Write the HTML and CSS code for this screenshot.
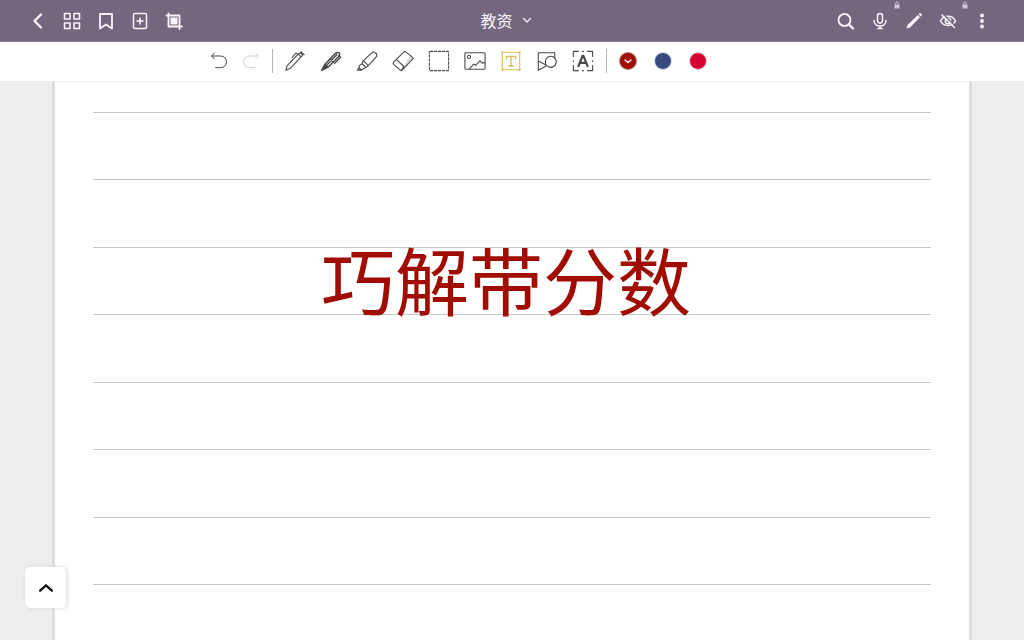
FILE: index.html
```html
<!DOCTYPE html>
<html lang="zh-CN">
  <head>
    <meta charset="UTF-8" />
    <meta name="viewport" content="width=device-width, initial-scale=1.0" />
    <title>教资</title>
    <link rel="stylesheet" href="styles.css">
  </head>
  <body>
    <header class="topbar">
      <nav class="group">
        <button aria-label="Back"><svg viewBox="0 0 20 20"><path d="M13 3.500 6.500 10l6.500 6.500" stroke-width="2.400" /></svg></button>
        <button aria-label="Pages"><svg viewBox="0 0 20 20"><path d="M2.500 2.500h5.500v5.500H2.500zM12 2.500h5.500v5.500H12zM2.500 12h5.500v5.500H2.500zM12 12h5.500v5.500H12z" /></svg></button>
        <button aria-label="Bookmark"><svg viewBox="0 0 20 20"><path d="M4 3h12v14.500l-6-4-6 4z" stroke-width="1.800" /></svg></button>
        <button aria-label="Add page"><svg viewBox="0 0 20 20"><rect x="3.500" y="2.500" width="13" height="15" rx="1.500" /><path d="M10 7v6M7 10h6" /></svg></button>
        <button aria-label="Crop"><svg viewBox="0 0 20 20"><path d="M2.500 4.500h13V18M4.500 2.500v13H18" stroke-width="1.800" /><path class="solid" d="M6.500 6.500h7v7h-7z" /></svg></button>
      </nav>
      <button class="title">教资<svg viewBox="0 0 10 10"><path d="M1.500 3.500 5 7l3.500-3.500" stroke-width="1.200" /></svg></button>
      <nav class="group right">
        <button aria-label="Search"><svg viewBox="0 0 20 20"><circle cx="8.500" cy="9" r="6" stroke-width="1.800" /><path d="m13 13.500 4 4" stroke-width="2.200" /></svg></button>
        <button aria-label="Record">
          <svg viewBox="0 0 20 20"><rect x="7.500" y="2.500" width="5" height="9.500" rx="2.500" /><path d="M4 9.500c0 7.300 12 7.300 12 0M10 15v2.500M8 17.500h4" /></svg>
          <svg class="lock" viewBox="0 0 6 8"><path d="M1.700 4V2.300a1.300 1.300 0 0 1 2.600 0V4" stroke-width="1" /><rect class="solid" x=".5" y="3.500" width="5" height="4" /></svg>
        </button>
        <button aria-label="Edit"><svg viewBox="0 0 20 20"><path class="solid" d="m2.500 17.500 1-3.500L13.700 4l2.300 2.300L6 16.500zM14.500 3.200l1-1c1-.7 3 1.300 2.300 2.300l-1 1z" /></svg></button>
        <button aria-label="Hide">
          <svg viewBox="0 0 20 20"><path d="M2.500 10c3-6.500 12-6.500 15 0-3 6-12 6-15 0z" /><circle cx="10" cy="10" r="2.700" /><path class="gap" d="m5.500 3.500 12 12" /><path d="m4 4 12.500 12.500" /></svg>
          <svg class="lock" viewBox="0 0 6 8"><path d="M1.700 4V2.300a1.300 1.300 0 0 1 2.600 0V4" stroke-width="1" /><rect class="solid" x=".5" y="3.500" width="5" height="4" /></svg>
        </button>
        <button aria-label="More"><svg viewBox="0 0 20 20"><g class="solid"><circle cx="10" cy="4.500" r="1.900" /><circle cx="10" cy="10" r="1.900" /><circle cx="10" cy="15.500" r="1.900" /></g></svg></button>
      </nav>
    </header>

    <div class="toolbar" role="toolbar">
      <button class="step" aria-label="Undo"><svg viewBox="0 0 24 24"><path d="M6.500 2.500 3 6l3.500 3.500M3 6h11a7 7 0 0 1 0 14H8" /></svg></button>
      <button class="step" aria-label="Redo" disabled><svg viewBox="0 0 24 24"><path d="M17.500 2.500 21 6l-3.500 3.500M21 6H10a7 7 0 0 0 0 14h6" /></svg></button>
      <span class="divider"></span>
      <button aria-label="Pencil"><svg viewBox="0 0 24 24"><path d="M2 22 3.500 17 15.500 4.500 18.500 7.500 7 20zM15.500 4.500l2.500-1.500 2.500 2.500-2 2M18.500 2 22 5M9 8l4-4.500 2 1" /></svg></button>
      <button aria-label="Pen"><svg viewBox="0 0 24 24"><path d="M2 22 5.500 15.500 16 4.500c1.500-2 5-2.500 5.500-.5s-1 3-2 4L9 18.500z" stroke-width="1.600" /><path class="ink" d="m2 22 3.500-6.500L9 18.500z" /><path d="M11 9.500l3.500 3.500M7.500 16.500 18.500 5M20.500 6l2 2-6.500 6.500" stroke-width="1.500" /></svg></button>
      <button aria-label="Highlighter"><svg viewBox="0 0 24 24"><path d="m8 11.500 10.500-9.500 4 2v3L13.500 17zM8 11.500 6.500 15l4.500 4 2.500-2zM6.500 15 3.500 17v3l2.500 1.500 5-2.500M3 19.500 1.500 22H6" /></svg></button>
      <button aria-label="Eraser"><svg viewBox="0 0 24 24"><path class="shade" d="M11 21 20.500 5l2.500 3.500z" /><path d="M1.500 13.500 13 2q1-1 2 0l7.500 6q1 1 0 2L11 22q-1 1-2 0l-7-6q-1-1-.5-2.500zM5 10.500l8 7.500-2.500 3.500" /></svg></button>
      <button aria-label="Select"><svg viewBox="0 0 24 24"><rect x="1.500" y="1.500" width="21" height="21" rx="1" stroke-dasharray="2.600 1.800" /></svg></button>
      <button aria-label="Image"><svg viewBox="0 0 24 24"><rect x="1" y="3" width="22" height="18" rx="1" /><circle cx="5.500" cy="7.500" r="1.700" /><path d="m6 20.500 4.500-5 2.500 1 4.500-5 1.500 2.500h4" /></svg></button>
      <button class="active" aria-label="Text"><svg viewBox="0 0 24 24"><rect x="2.500" y="2.500" width="19" height="19" /><path d="M7 9.500V7h10v2.500M12 7v10.500M9.500 17.500h5" stroke-width="1.500" /><path class="ink" d="M1.500 1.500h2v2h-2zM20.500 1.500h2v2h-2zM1.500 20.500h2v2h-2zM20.500 20.500h2v2h-2z" stroke="none" /></svg></button>
      <button aria-label="Shapes"><svg viewBox="0 0 24 24"><path d="M2.500 11V3h18v5.500M2.500 12l9.500 5-9.500 5zM10.500 15a6 6 0 1 1 2.500 3" /></svg></button>
      <button aria-label="Recognize"><svg viewBox="0 0 24 24"><path d="M1.500 7V1.500H7M17 1.500h5.500V7M22.500 17v5.500H17M7 22.500H1.500V17M11.500 1.500h1M11.500 22.500h1M1.500 11.500v1M22.500 11.500v1" /><path d="m7 17.500 4.500-11h1l4.500 11M9 14h6" stroke-width="2.400" /></svg></button>
      <span class="divider"></span>
      <button class="swatch" aria-label="Dark red"><span class="dot dark-red"><svg viewBox="0 0 10 10"><path d="M2 4 5 6.500 8 4" stroke-width="1.300" /></svg></span></button>
      <button class="swatch" aria-label="Blue"><span class="dot blue"></span></button>
      <button class="swatch" aria-label="Red"><span class="dot red"></span></button>
    </div>

    <main class="desk">
      <article class="paper">
        <div class="rules">
          <span></span><span></span><span></span><span></span><span></span><span></span><span></span>
        </div>
        <h1 class="note">巧解带分数</h1>
      </article>
      <button class="expand" aria-label="Expand"><svg viewBox="0 0 20 20"><path d="m3.500 13 6.500-6 6.500 6" /></svg></button>
    </main>
  </body>
</html>
```

FILE: styles.css
```css
* {
  box-sizing: border-box;
  margin: 0;
  padding: 0;
}
body {
  display: flex;
  flex-direction: column;
  min-height: 100vh;
  background: #eee;
  font-family: "Noto Sans CJK SC", sans-serif;
}
button {
  display: flex;
  align-items: center;
  justify-content: center;
  border: 0;
  background: transparent;
  color: inherit;
  font: inherit;
  cursor: pointer;
}
svg {
  display: block;
  fill: none;
  stroke: currentColor;
  stroke-width: 1.5;
  stroke-linecap: round;
  stroke-linejoin: round;
}
.solid {
  fill: currentColor;
  stroke: none;
}

/* top bar */
.topbar {
  display: grid;
  grid-template-columns: 1fr auto 1fr;
  height: 42px;
  padding: 0 25px 0 21px;
  background: #74667e;
  border-bottom: 1px solid #8b7f94;
  color: #faf5fc;
}
.group {
  display: flex;

  & button {
    position: relative;
    width: 34px;
  }
  & svg {
    width: 20px;
    height: 20px;
  }
  & .lock {
    position: absolute;
    top: 1px;
    right: -3px;
    width: 6px;
    height: 8px;
    color: #cfc3d6;
  }
  & .gap {
    stroke: #74667e;
  }
}
.right {
  justify-content: flex-end;
}
.title {
  gap: 9px;
  padding: 0 8px 2px 0;
  font-size: 16px;

  & svg {
    width: 10px;
    height: 10px;
  }
}

/* drawing tools */
.toolbar {
  display: flex;
  align-items: center;
  justify-content: center;
  height: 40px;
  padding: 0 106px 2px 0;
  background: #fff;
  border-bottom: 1px solid #f0e9ee;
  color: #4a4a4a;

  & button {
    width: 36px;
    height: 36px;
  }
  & svg {
    width: 22px;
    height: 22px;
    stroke-width: 1.2;
  }
  & .step {
    width: 32px;
  }
  & .step svg {
    width: 20px;
    height: 20px;
  }
  & .step:disabled {
    color: #cfcfcf;
  }
  & .active {
    color: #d8bf55;
  }
  & .ink {
    fill: currentColor;
  }
  & .shade {
    fill: #d9d9e2;
    stroke: none;
  }
  & .swatch {
    width: 35px;
  }
}
.divider {
  width: 1px;
  height: 24px;
  margin: 0 4px 0 5px;
  background: #b5b5b5;
}
.dot {
  display: flex;
  align-items: center;
  justify-content: center;
  width: 18px;
  height: 18px;
  border: 1px solid #e3e3ec;
  border-radius: 50%;
  color: #fff;

  .toolbar & svg {
    width: 10px;
    height: 10px;
  }
}
.dark-red {
  border-color: #b08a88;
  background-color: #a01008;
}
.blue {
  background-color: #364a7d;
}
.red {
  background-color: #d8002f;
}

/* page */
.desk {
  position: relative;
  display: flex;
  flex: 1;
  padding: 0 52px;
}
.paper {
  position: relative;
  display: flex;
  flex: 1;
  padding: 30px 38px 55px;
  background: #fff;
  border: solid #dfdfdf;
  border-width: 0 3px;
}
.rules {
  display: flex;
  flex: 1;
  flex-direction: column;
  border-top: 1px solid #c6c8c6;

  & span {
    flex: 1;
    border-bottom: 1px solid #c6c8c6;
  }
}
.note {
  position: absolute;
  top: 141px;
  left: 266px;
  color: #a00d00;
  font-size: 74px;
  font-weight: 400;
  line-height: 110px;
  white-space: nowrap;
}
.expand {
  position: absolute;
  bottom: 32px;
  left: 25px;
  width: 41px;
  height: 41px;
  border-radius: 5px;
  background: #fff;
  box-shadow: 1px 0 4px #d9d3da;
  color: #111;

  & svg {
    width: 18px;
    height: 18px;
    stroke-width: 2.5;
  }
}
```
